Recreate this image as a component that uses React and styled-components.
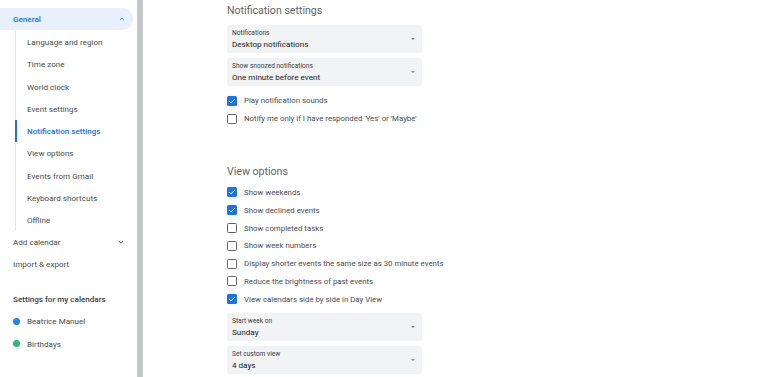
import React from "react";
import styled, { createGlobalStyle } from "styled-components";

const Global = createGlobalStyle`
  html, body { margin: 0; padding: 0; background: #fff; }
  body { font-family: Roboto, "Noto Sans", Arial, sans-serif; overflow: hidden; }
  * { box-sizing: border-box; }
`;

const Page = styled.div`
  display: flex;
  width: 768px;
  height: 377px;
  overflow: hidden;
  background: #fff;
`;

const Sidebar = styled.nav`
  width: 137px;
  flex: none;
  padding-top: 8px;
  display: flex;
  flex-direction: column;
  & > * { flex: none; }
`;

const ScrollTrack = styled.div`
  width: 6px;
  flex: none;
  background: #c4c6c9;
`;

const GroupHeader = styled.div`
  height: 22px;
  width: 133px;
  display: flex;
  align-items: center;
  justify-content: space-between;
  padding: 0 7px 0 13px;
  font-size: 8.1px;
  color: ${(p) => (p.$active ? "#1a73e8" : "#4a4d51")};
  background: ${(p) => (p.$active ? "#e8f0fe" : "transparent")};
  border-radius: 0 11px 11px 0;
  font-weight: ${(p) => (p.$active ? 500 : 400)};
`;

const SubList = styled.div`
  margin-left: 15px;
  border-left: 1px solid #e3e4e6;
  padding: 1px 0 0;
  display: flex;
  flex-direction: column;
`;

const SubItem = styled.div`
  height: 22.25px;
  flex: none;
  display: flex;
  align-items: center;
  padding-left: 10px;
  margin-left: -1px;
  font-size: 8.1px;
  color: ${(p) => (p.$active ? "#1a73e8" : "#4a4d51")};
  font-weight: ${(p) => (p.$active ? 500 : 400)};
  border-left: 2px solid ${(p) => (p.$active ? "#1a73e8" : "transparent")};
`;

const SectionTitle = styled.div`
  margin-top: ${(p) => p.$top}px;
  height: 22px;
  display: flex;
  align-items: center;
  padding-left: 13px;
  font-size: 8.1px;
  font-weight: 500;
  color: #3c4043;
`;

const CalItem = styled.div`
  height: 22.25px;
  display: flex;
  align-items: center;
  padding-left: 13px;
  gap: 7px;
  font-size: 8.1px;
  color: #4a4d51;
`;

const Dot = styled.span`
  width: 7px;
  height: 7px;
  border-radius: 50%;
  background: ${(p) => p.$color};
`;

const Main = styled.main`
  flex: 1;
  padding: 2px 0 0 84px;
  display: flex;
  flex-direction: column;
  & > * { flex: none; }
`;

const Heading = styled.h2`
  margin: 0;
  height: 17px;
  display: flex;
  align-items: center;
  font-size: 10.6px;
  font-weight: 400;
  color: #5f6368;
  margin-bottom: ${(p) => p.$gap ?? 6}px;
`;

const Select = styled.div`
  width: 195px;
  height: 28px;
  background: #f1f3f4;
  border-radius: 3px;
  margin-bottom: 5px;
  position: relative;
  padding: 3px 4px 0 5px;
  display: flex;
  flex-direction: column;
`;

const SelectLabel = styled.span`
  font-size: 6.6px;
  color: #3c4043;
  line-height: 10px;
`;

const SelectValue = styled.span`
  font-size: 8.1px;
  color: #202124;
  line-height: 13px;
`;

const Arrow = styled.span`
  position: absolute;
  right: 7px;
  top: 13px;
  width: 0;
  height: 0;
  border-left: 2.5px solid transparent;
  border-right: 2.5px solid transparent;
  border-top: 2.5px solid #80868b;
`;

const CheckRow = styled.label`
  height: 17.8px;
  display: flex;
  align-items: center;
  gap: 7px;
  font-size: 7.85px;
  color: #4a4d51;
`;

const Box = styled.span`
  width: 10px;
  height: 10px;
  flex: none;
  border-radius: 1.5px;
  border: ${(p) => (p.$checked ? "none" : "1.3px solid #5f6368")};
  background: ${(p) => (p.$checked ? "#1a73e8" : "#fff")};
  display: flex;
  align-items: center;
  justify-content: center;
`;

const Spacer = styled.div`
  height: ${(p) => p.$h}px;
`;

const ChevronUp = () => (
  <svg width="8" height="8" viewBox="0 0 24 24">
    <path d="M7.4 15.4 12 10.8l4.6 4.6L18 14l-6-6-6 6z" fill="#1a73e8" />
  </svg>
);
const ChevronDown = () => (
  <svg width="10" height="10" viewBox="0 0 24 24">
    <path d="M7.4 8.6 12 13.2l4.6-4.6L18 10l-6 6-6-6z" fill="#5f6368" />
  </svg>
);

const Check = ({ checked, children }) => (
  <CheckRow>
    <Box $checked={checked}>
      {checked && (
        <svg width="8" height="8" viewBox="0 0 24 24">
          <path d="M4 12.5l5 5L20 6.5" stroke="#fff" strokeWidth="3" fill="none" />
        </svg>
      )}
    </Box>
    {children}
  </CheckRow>
);

const Dropdown = ({ label, value }) => (
  <Select>
    <SelectLabel>{label}</SelectLabel>
    <SelectValue>{value}</SelectValue>
    <Arrow />
  </Select>
);

const subs = [
  "Language and region",
  "Time zone",
  "World clock",
  "Event settings",
  "Notification settings",
  "View options",
  "Events from Gmail",
  "Keyboard shortcuts",
  "Offline",
];

export default function App() {
  return (
    <>
      <Global />
      <Page>
        <Sidebar>
          <GroupHeader $active>
            General <ChevronUp />
          </GroupHeader>
          <SubList>
            {subs.map((s) => (
              <SubItem key={s} $active={s === "Notification settings"}>
                {s}
              </SubItem>
            ))}
          </SubList>
          <GroupHeader>
            Add calendar <ChevronDown />
          </GroupHeader>
          <GroupHeader>Import &amp; export</GroupHeader>
          <SectionTitle $top={13}>Settings for my calendars</SectionTitle>
          <CalItem>
            <Dot $color="#1e88e5" />
            Beatrice Manuel
          </CalItem>
          <CalItem>
            <Dot $color="#33b679" />
            Birthdays
          </CalItem>
          <SectionTitle $top={22}>Settings for other calendars</SectionTitle>
        </Sidebar>
        <ScrollTrack />
        <Main>
          <Heading>Notification settings</Heading>
          <Dropdown label="Notifications" value="Desktop notifications" />
          <Dropdown label="Show snoozed notifications" value="One minute before event" />
          <Spacer $h={1} />
          <Check checked>Play notification sounds</Check>
          <Check>Notify me only if I have responded 'Yes' or 'Maybe'</Check>
          <Spacer $h={35} />
          <Heading $gap={4}>View options</Heading>
          <Check checked>Show weekends</Check>
          <Check checked>Show declined events</Check>
          <Check>Show completed tasks</Check>
          <Check>Show week numbers</Check>
          <Check>Display shorter events the same size as 30 minute events</Check>
          <Check>Reduce the brightness of past events</Check>
          <Check checked>View calendars side by side in Day View</Check>
          <Spacer $h={5} />
          <Dropdown label="Start week on" value="Sunday" />
          <Dropdown label="Set custom view" value="4 days" />
        </Main>
      </Page>
    </>
  );
}
